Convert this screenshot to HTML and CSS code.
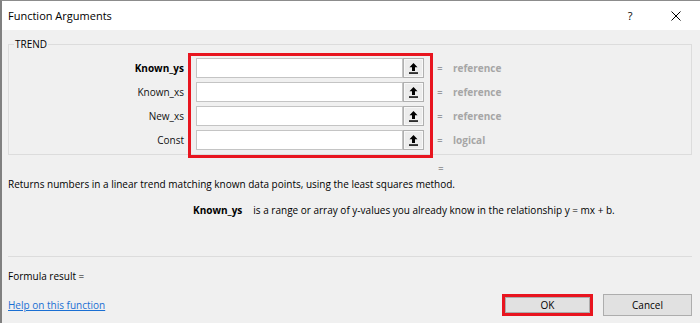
FILE: index.html
```html
<!DOCTYPE html>
<html>
<head>
<meta charset="utf-8">
<link rel="stylesheet" href="styles.css">
</head>
<body>
<div class="window">
  <div class="titlebar">
    <span class="title">Function Arguments</span>
    <div class="tb-buttons">
      <span class="tb-btn help">?</span>
      <span class="tb-btn close">
        <svg width="10" height="10" viewBox="0 0 10 10"><path d="M0.5 0.5 L9.5 9.5 M9.5 0.5 L0.5 9.5" stroke="#000" stroke-width="1" fill="none"/></svg>
      </span>
    </div>
  </div>
  <div class="content">
    <fieldset class="group">
      <legend>TREND</legend>
      <div class="args">
        <div class="labels">
          <div class="row bold">Known_ys</div>
          <div class="row">Known_xs</div>
          <div class="row">New_xs</div>
          <div class="row">Const</div>
        </div>
        <div class="fields">
          <div class="row field"><span class="input"></span><span class="ref-btn"><svg width="9" height="11" viewBox="0 0 9 11"><path d="M4.5 0 L8.5 4.2 H6 V8 H3 V4.2 H0.5 Z" fill="#000"/><rect x="0" y="9.3" width="9" height="1.5" fill="#000"/></svg></span></div>
          <div class="row field"><span class="input"></span><span class="ref-btn"><svg width="9" height="11" viewBox="0 0 9 11"><path d="M4.5 0 L8.5 4.2 H6 V8 H3 V4.2 H0.5 Z" fill="#000"/><rect x="0" y="9.3" width="9" height="1.5" fill="#000"/></svg></span></div>
          <div class="row field"><span class="input"></span><span class="ref-btn"><svg width="9" height="11" viewBox="0 0 9 11"><path d="M4.5 0 L8.5 4.2 H6 V8 H3 V4.2 H0.5 Z" fill="#000"/><rect x="0" y="9.3" width="9" height="1.5" fill="#000"/></svg></span></div>
          <div class="row field"><span class="input"></span><span class="ref-btn"><svg width="9" height="11" viewBox="0 0 9 11"><path d="M4.5 0 L8.5 4.2 H6 V8 H3 V4.2 H0.5 Z" fill="#000"/><rect x="0" y="9.3" width="9" height="1.5" fill="#000"/></svg></span></div>
        </div>
        <div class="results">
          <div class="row"><span class="eq">=</span><span class="val">reference</span></div>
          <div class="row"><span class="eq">=</span><span class="val">reference</span></div>
          <div class="row"><span class="eq">=</span><span class="val">reference</span></div>
          <div class="row"><span class="eq">=</span><span class="val">logical</span></div>
        </div>
      </div>
    </fieldset>
    <div class="total-eq"><span class="eq">=</span></div>
    <div class="desc">Returns numbers in a linear trend matching known data points, using the least squares method.</div>
    <div class="argdesc"><span class="argname">Known_ys</span><span class="argtext">is a range or array of y-values you already know in the relationship y = mx + b.</span></div>
    <div class="footer">
      <div class="result">Formula result =</div>
      <div class="bottom">
        <a class="help-link" href="#">Help on this function</a>
        <div class="buttons">
          <span class="btn ok">OK</span>
          <span class="btn">Cancel</span>
        </div>
      </div>
    </div>
  </div>
</div>
</body>
</html>
```

FILE: styles.css
```css
* { box-sizing: border-box; }
html, body { margin: 0; padding: 0; }
body {
  font-family: "Open Sans", "Noto Sans", "Liberation Sans", sans-serif;
  font-size: 10px;
  color: #000;
  background: #f0f0f0;
}
.window {
  width: 700px;
  height: 323px;
  border-left: 2px solid #808080;
  border-top: 1px solid #8c8c8c;
  background: #f0f0f0;
  display: flex;
  flex-direction: column;
  overflow: hidden;
}
.titlebar {
  height: 29px;
  background: #fff;
  display: flex;
  align-items: center;
  padding-left: 6px;
  padding-right: 2px;
}
.title { font-size: 11px; color: #000; }
.tb-buttons { margin-left: auto; display: flex; gap: 2px; height: 100%; }
.tb-btn {
  width: 44px;
  display: flex;
  align-items: center;
  justify-content: center;
  color: #000;
}
.tb-btn.help { font-size: 11px; }
.content {
  flex: 1;
  padding: 0 8px 0 6px;
  display: flex;
  flex-direction: column;
}
.group {
  margin: 7px 0 0 0;
  padding: 7px 0 4px 0;
  border: 1px solid #dcdcdc;
  min-width: 0;
}
.group legend {
  margin-left: 5px;
  padding: 0 1px;
  line-height: 14px;
  font-size: 10px;
}
.args { display: flex; }
.labels, .fields, .results {
  display: flex;
  flex-direction: column;
  gap: 4px;
}
.row { height: 20px; display: flex; align-items: center; }
.labels { width: 175px; }
.labels .row { justify-content: flex-end; color: #111; }
.labels .row.bold { font-weight: 700; color: #000; }
.fields {
  margin-left: 12px;
  position: relative;
}
.fields::after {
  content: "";
  position: absolute;
  top: -5px;
  left: -8px;
  right: -9px;
  bottom: -8px;
  border: 3px solid #e8151f;
}
.field .input {
  width: 207px;
  height: 20px;
  background: #fff;
  border: 1px solid #c4c4c4;
}
.field .ref-btn {
  width: 21px;
  height: 20px;
  background: #ececec;
  border: 1px solid #b0b0b0;
  box-shadow: inset 0 0 0 1px #f8f8f8;
  display: flex;
  align-items: center;
  justify-content: center;
}
.results { margin-left: 13px; }
.eq { color: #555; width: 16px; display: inline-block; }
.val { color: #a6a6a6; font-weight: 700; }
.total-eq {
  margin-top: 6px;
  height: 14px;
  line-height: 14px;
  padding-left: 430px;
}
.desc {
  margin-top: 2px;
  line-height: 14px;
  padding-left: 0;
}
.argdesc {
  margin-top: 12px;
  line-height: 14px;
  display: flex;
  padding-left: 185px;
  gap: 11px;
}
.argname { font-weight: 700; color: #000; }
.footer {
  margin-top: auto;
  border-top: 1px solid #dcdcdc;
  padding-bottom: 7px;
}
.result {
  margin-top: 12px;
  line-height: 14px;
}
.bottom {
  margin-top: 11px;
  display: flex;
  align-items: center;
}
.help-link { color: #1a6fd3; text-decoration: underline; }
.buttons { margin-left: auto; display: flex; gap: 10px; }
.btn {
  width: 89px;
  height: 22px;
  background: #e1e1e1;
  border: 1px solid #adadad;
  display: flex;
  align-items: center;
  justify-content: center;
  color: #000;
}
.btn.ok {
  width: 91px;
  border: 3px solid #e8151f;
  box-shadow: inset 0 0 0 1px #adadad;
}
```
